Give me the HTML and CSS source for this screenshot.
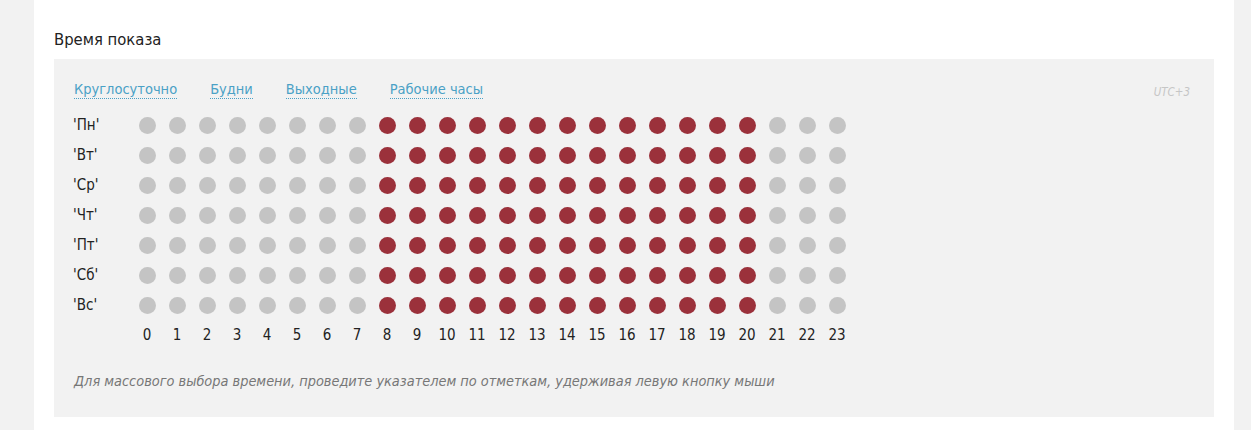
FILE: index.html
```html
<!DOCTYPE html>
<html lang="ru">
<head>
<meta charset="utf-8">
<title>Время показа</title>
<link rel="stylesheet" href="styles.css">
</head>
<body>
<div class="page">
  <div class="card">
    <h2 class="title">Время показа</h2>
    <div class="panel">
      <div class="top">
        <nav class="presets">
          <a class="preset">Круглосуточно</a>
          <a class="preset">Будни</a>
          <a class="preset">Выходные</a>
          <a class="preset">Рабочие часы</a>
        </nav>
        <span class="tz">UTC+3</span>
      </div>
      <div class="grid">
        <div class="row"><span class="day">'Пн'</span><i class="d"></i><i class="d"></i><i class="d"></i><i class="d"></i><i class="d"></i><i class="d"></i><i class="d"></i><i class="d"></i><i class="d on"></i><i class="d on"></i><i class="d on"></i><i class="d on"></i><i class="d on"></i><i class="d on"></i><i class="d on"></i><i class="d on"></i><i class="d on"></i><i class="d on"></i><i class="d on"></i><i class="d on"></i><i class="d on"></i><i class="d"></i><i class="d"></i><i class="d"></i></div>
        <div class="row"><span class="day">'Вт'</span><i class="d"></i><i class="d"></i><i class="d"></i><i class="d"></i><i class="d"></i><i class="d"></i><i class="d"></i><i class="d"></i><i class="d on"></i><i class="d on"></i><i class="d on"></i><i class="d on"></i><i class="d on"></i><i class="d on"></i><i class="d on"></i><i class="d on"></i><i class="d on"></i><i class="d on"></i><i class="d on"></i><i class="d on"></i><i class="d on"></i><i class="d"></i><i class="d"></i><i class="d"></i></div>
        <div class="row"><span class="day">'Ср'</span><i class="d"></i><i class="d"></i><i class="d"></i><i class="d"></i><i class="d"></i><i class="d"></i><i class="d"></i><i class="d"></i><i class="d on"></i><i class="d on"></i><i class="d on"></i><i class="d on"></i><i class="d on"></i><i class="d on"></i><i class="d on"></i><i class="d on"></i><i class="d on"></i><i class="d on"></i><i class="d on"></i><i class="d on"></i><i class="d on"></i><i class="d"></i><i class="d"></i><i class="d"></i></div>
        <div class="row"><span class="day">'Чт'</span><i class="d"></i><i class="d"></i><i class="d"></i><i class="d"></i><i class="d"></i><i class="d"></i><i class="d"></i><i class="d"></i><i class="d on"></i><i class="d on"></i><i class="d on"></i><i class="d on"></i><i class="d on"></i><i class="d on"></i><i class="d on"></i><i class="d on"></i><i class="d on"></i><i class="d on"></i><i class="d on"></i><i class="d on"></i><i class="d on"></i><i class="d"></i><i class="d"></i><i class="d"></i></div>
        <div class="row"><span class="day">'Пт'</span><i class="d"></i><i class="d"></i><i class="d"></i><i class="d"></i><i class="d"></i><i class="d"></i><i class="d"></i><i class="d"></i><i class="d on"></i><i class="d on"></i><i class="d on"></i><i class="d on"></i><i class="d on"></i><i class="d on"></i><i class="d on"></i><i class="d on"></i><i class="d on"></i><i class="d on"></i><i class="d on"></i><i class="d on"></i><i class="d on"></i><i class="d"></i><i class="d"></i><i class="d"></i></div>
        <div class="row"><span class="day">'Сб'</span><i class="d"></i><i class="d"></i><i class="d"></i><i class="d"></i><i class="d"></i><i class="d"></i><i class="d"></i><i class="d"></i><i class="d on"></i><i class="d on"></i><i class="d on"></i><i class="d on"></i><i class="d on"></i><i class="d on"></i><i class="d on"></i><i class="d on"></i><i class="d on"></i><i class="d on"></i><i class="d on"></i><i class="d on"></i><i class="d on"></i><i class="d"></i><i class="d"></i><i class="d"></i></div>
        <div class="row"><span class="day">'Вс'</span><i class="d"></i><i class="d"></i><i class="d"></i><i class="d"></i><i class="d"></i><i class="d"></i><i class="d"></i><i class="d"></i><i class="d on"></i><i class="d on"></i><i class="d on"></i><i class="d on"></i><i class="d on"></i><i class="d on"></i><i class="d on"></i><i class="d on"></i><i class="d on"></i><i class="d on"></i><i class="d on"></i><i class="d on"></i><i class="d on"></i><i class="d"></i><i class="d"></i><i class="d"></i></div>
        <div class="row hours"><span class="day"></span><span class="h">0</span><span class="h">1</span><span class="h">2</span><span class="h">3</span><span class="h">4</span><span class="h">5</span><span class="h">6</span><span class="h">7</span><span class="h">8</span><span class="h">9</span><span class="h">10</span><span class="h">11</span><span class="h">12</span><span class="h">13</span><span class="h">14</span><span class="h">15</span><span class="h">16</span><span class="h">17</span><span class="h">18</span><span class="h">19</span><span class="h">20</span><span class="h">21</span><span class="h">22</span><span class="h">23</span></div>
      </div>
      <p class="note">Для массового выбора времени, проведите указателем по отметкам, удерживая левую кнопку мыши</p>
    </div>
  </div>
</div>
</body>
</html>
```

FILE: styles.css
```css
html, body {
  margin: 0;
  padding: 0;
}
body {
  background: #f2f2f2;
  font-family: "DejaVu Sans Condensed", "Liberation Sans", sans-serif;
  color: #222;
  height: 430px;
  overflow: hidden;
}
.page {
  display: flex;
  padding-left: 34px;
}
.card {
  width: 1200px;
  background: #fff;
  padding: 28px 20px 20px 20px;
  height: 430px;
  box-sizing: border-box;
}
.title {
  margin: 0 0 7px 0;
  font-size: 16.5px;
  line-height: 24px;
  font-weight: normal;
  color: #222;
}
.panel {
  background: #f2f2f2;
  padding: 18px 24px 26px 20px;
}
.top {
  display: flex;
  justify-content: space-between;
  align-items: center;
  height: 24px;
}
.presets {
  display: flex;
  gap: 33px;
}
.preset {
  color: #4aa1c6;
  font-size: 14.5px;
  line-height: 18px;
  border-bottom: 1px dotted #4aa1c6;
  cursor: pointer;
}
.tz {
  color: #c6c6c6;
  font-style: italic;
  font-size: 11.5px;
  margin-top: 6px;
}
.grid {
  margin-top: 9px;
  display: flex;
  flex-direction: column;
}
.row {
  display: grid;
  grid-template-columns: 58px repeat(24, 30px);
  height: 30px;
  align-items: center;
  justify-items: center;
}
.day {
  justify-self: start;
  font-size: 15px;
  color: #222;
  margin-left: -1px;
}
.d {
  display: block;
  width: 17px;
  height: 17px;
  border-radius: 50%;
  background: #c4c4c4;
}
.d.on {
  background: #9b313b;
}
.h {
  font-size: 15px;
  color: #222;
}
.note {
  margin: 21px 0 0 0;
  font-size: 14.4px;
  line-height: 20px;
  font-style: italic;
  color: #777;
}
```
